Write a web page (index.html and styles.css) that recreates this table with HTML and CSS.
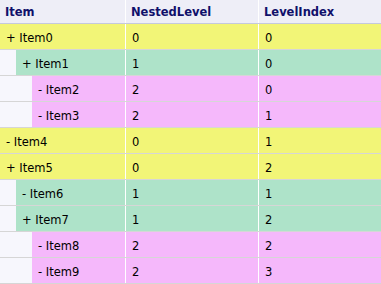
FILE: index.html
```html
<!DOCTYPE html>
<html>
<head>
<meta charset="utf-8">
<link rel="stylesheet" href="styles.css">
</head>
<body>
<div class="grid">
  <div class="row head">
    <div class="cell">Item</div>
    <div class="cell">NestedLevel</div>
    <div class="cell">LevelIndex</div>
  </div>
  <div class="row l0">
    <div class="cell first"><span class="txt">+ Item0</span></div>
    <div class="cell">0</div><div class="cell">0</div>
  </div>
  <div class="row l1">
    <div class="cell first"><span class="ind"></span><span class="txt">+ Item1</span></div>
    <div class="cell">1</div><div class="cell">0</div>
  </div>
  <div class="row l2">
    <div class="cell first"><span class="ind"></span><span class="txt">- Item2</span></div>
    <div class="cell">2</div><div class="cell">0</div>
  </div>
  <div class="row l2">
    <div class="cell first"><span class="ind"></span><span class="txt">- Item3</span></div>
    <div class="cell">2</div><div class="cell">1</div>
  </div>
  <div class="row l0">
    <div class="cell first"><span class="txt">- Item4</span></div>
    <div class="cell">0</div><div class="cell">1</div>
  </div>
  <div class="row l0">
    <div class="cell first"><span class="txt">+ Item5</span></div>
    <div class="cell">0</div><div class="cell">2</div>
  </div>
  <div class="row l1">
    <div class="cell first"><span class="ind"></span><span class="txt">- Item6</span></div>
    <div class="cell">1</div><div class="cell">1</div>
  </div>
  <div class="row l1">
    <div class="cell first"><span class="ind"></span><span class="txt">+ Item7</span></div>
    <div class="cell">1</div><div class="cell">2</div>
  </div>
  <div class="row l2">
    <div class="cell first"><span class="ind"></span><span class="txt">- Item8</span></div>
    <div class="cell">2</div><div class="cell">2</div>
  </div>
  <div class="row l2">
    <div class="cell first"><span class="ind"></span><span class="txt">- Item9</span></div>
    <div class="cell">2</div><div class="cell">3</div>
  </div>
</div>
</body>
</html>
```
FILE: styles.css
```css
html, body { margin: 0; padding: 0; background: #ffffff; }
body { font-family: "DejaVu Sans", Verdana, sans-serif; font-size: 11.5px; color: #000; }
.grid { width: 381px; }
.row {
  display: grid;
  grid-template-columns: 125px 132px 122px;
  column-gap: 1px;
  background: #ffffff;
  height: 25px;
  border-bottom: 1px solid #d6d6d6;
}
.cell { display: flex; align-items: center; padding-left: 6px; padding-top: 3px; box-sizing: border-box; }
.head { height: 23px; border-bottom: 1px solid #c5c9dc; }
.head .cell { background: #eeeef7; color: #10106a; font-weight: bold; padding-left: 5px; padding-top: 1px; }
.l0 .cell { background: #f2f577; }
.l1 .cell { background: #aee3c9; }
.l2 .cell { background: #f5b8fb; }
.cell.first { padding: 0; align-items: stretch; }
.ind { display: block; background: #f7f7fd; flex: none; }
.l1 .ind { width: 16px; }
.l2 .ind { width: 32px; }
.txt { display: flex; align-items: center; padding-left: 6px; padding-top: 3px; }
```
